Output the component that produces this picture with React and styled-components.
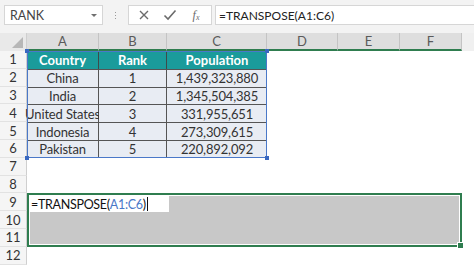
import React from 'react';
import styled, { createGlobalStyle } from 'styled-components';

const GlobalStyle = createGlobalStyle`
  html, body { margin: 0; padding: 0; background: #ffffff; }
  body { font-family: Lato, "Open Sans", sans-serif; overflow: hidden; }
`;

const columns = ['A', 'B', 'C', 'D', 'E', 'F'];
const data = [
  ['China', '1', '1,439,323,880'],
  ['India', '2', '1,345,504,385'],
  ['United States', '3', '331,955,651'],
  ['Indonesia', '4', '273,309,615'],
  ['Pakistan', '5', '220,892,092'],
];
const ROWS = 12;

export default function App() {
  return (
    <Page>
      <GlobalStyle />
      <FormulaBar>
        <NameBox>
          <span>RANK</span>
          <Caret />
        </NameBox>
        <Grip>
          <i /><i /><i />
        </Grip>
        <Buttons>
          <IconBtn>
            <svg width="12" height="12" viewBox="0 0 12 12">
              <path d="M2 2 L10 10 M10 2 L2 10" stroke="#6b6b6b" strokeWidth="1.4" fill="none" />
            </svg>
          </IconBtn>
          <IconBtn>
            <svg width="14" height="12" viewBox="0 0 14 12">
              <path d="M1.5 6.5 L5 10 L12.5 1.5" stroke="#6b6b6b" strokeWidth="1.6" fill="none" />
            </svg>
          </IconBtn>
          <IconBtn>
            <Fx>f<sub>x</sub></Fx>
          </IconBtn>
        </Buttons>
        <FormulaInput>=TRANSPOSE(A1:C6)</FormulaInput>
      </FormulaBar>

      <Sheet>
        <Corner>
          <svg width="11" height="11" viewBox="0 0 11 11">
            <path d="M11 0 L11 11 L0 11 Z" fill="#b7b7b7" />
          </svg>
        </Corner>
        {columns.map((c) => (
          <ColHead key={c}>{c}</ColHead>
        ))}
        <ColFiller />

        {Array.from({ length: ROWS }, (_, i) => (
          <RowHead key={i} style={{ gridRow: i + 2 }}>{i + 1}</RowHead>
        ))}

        <THead $col={2}>Country</THead>
        <THead $col={3}>Rank</THead>
        <THead $col={4} $last>Population</THead>
        {data.map((row, r) =>
          row.map((v, c) => (
            <TCell key={r + '-' + c} $col={c + 2} $row={r + 3} $last={c === 2}>
              {v}
            </TCell>
          ))
        )}

        <RefBox>
          <Handle $top $left />
          <Handle $top />
          <Handle $left />
          <Handle />
        </RefBox>

        <Selection>
          <EditCell>
            =TRANSPOSE(<Ref>A1:C6</Ref>)<Cursor />
          </EditCell>
          <SelHandle />
        </Selection>
      </Sheet>
    </Page>
  );
}

const Page = styled.div`
  width: 474px;
  height: 266px;
  overflow: hidden;
  background: #ffffff;
`;

const FormulaBar = styled.div`
  height: 33px;
  box-sizing: border-box;
  padding: 5px 0 0 4px;
  background: #f3f3f3;
  display: flex;
  align-items: flex-start;
`;

const Box = styled.div`
  height: 20px;
  box-sizing: border-box;
  background: #ffffff;
  border: 1px solid #d6d6d6;
  display: flex;
  align-items: center;
`;

const NameBox = styled(Box)`
  width: 99px;
  padding: 0 5px 0 5px;
  justify-content: space-between;
  font-size: 12.5px;
  color: #444;
`;

const Caret = styled.span`
  width: 0;
  height: 0;
  border-left: 3px solid transparent;
  border-right: 3px solid transparent;
  border-top: 3px solid #707070;
`;

const Grip = styled.div`
  width: 25px;
  height: 20px;
  display: flex;
  flex-direction: column;
  align-items: center;
  justify-content: center;
  gap: 2px;
  i {
    width: 1px;
    height: 1px;
    background: #9a9a9a;
  }
`;

const Buttons = styled(Box)`
  width: 84px;
  justify-content: space-around;
  padding: 0 2px;
`;

const IconBtn = styled.span`
  width: 22px;
  display: flex;
  justify-content: center;
  align-items: center;
`;

const Fx = styled.span`
  font-family: "Liberation Serif", serif;
  font-style: italic;
  font-size: 12px;
  color: #6b6b6b;
  sub {
    font-size: 8px;
    vertical-align: -1px;
  }
`;

const FormulaInput = styled(Box)`
  flex: 1;
  margin-left: 3px;
  border-right: none;
  padding-left: 3px;
  font-size: 12px;
  color: #222;
`;

const Sheet = styled.div`
  display: grid;
  grid-template-columns: 27px 72px 68px 100px 71px 62px 62px 1fr;
  grid-template-rows: 18px repeat(${ROWS}, 17.8px);
  font-size: 13px;
`;

const Corner = styled.div`
  grid-column: 1;
  grid-row: 1;
  background: #e9e9e9;
  border-right: 1px solid #cfcfcf;
  display: flex;
  align-items: flex-end;
  justify-content: flex-end;
  padding: 0 3px 3px 0;
`;

const ColHead = styled.div`
  grid-row: 1;
  background: #dedede;
  border-right: 1px solid #c4c4c4;
  border-bottom: 2px solid #2f7d4f;
  color: #5a5a5a;
  display: flex;
  align-items: center;
  justify-content: center;
  font-size: 13px;
`;

const ColFiller = styled.div`
  grid-row: 1;
  grid-column: 8;
  background: #f0f0f0;
`;

const RowHead = styled.div`
  grid-column: 1;
  background: #f5f5f5;
  border-right: 1px solid #cfcfcf;
  border-bottom: 1px solid #e2e2e2;
  color: #333;
  display: flex;
  align-items: center;
  justify-content: center;
`;

const THead = styled.div`
  grid-column: ${(p) => p.$col};
  grid-row: 2;
  background: #1a9b9b;
  color: #ffffff;
  font-weight: 700;
  display: flex;
  align-items: center;
  justify-content: center;
  border-right: ${(p) => (p.$last ? 'none' : '1.5px solid #3d4b4b')};
`;

const TCell = styled.div`
  grid-column: ${(p) => p.$col};
  grid-row: ${(p) => p.$row};
  background: #e8ecf3;
  color: #333;
  display: flex;
  align-items: center;
  justify-content: center;
  white-space: nowrap;
  letter-spacing: -0.15px;
  border-top: 1.5px solid #555;
  border-right: ${(p) => (p.$last ? 'none' : '1.5px solid #555')};
`;

const RefBox = styled.div`
  grid-column: 2 / 5;
  grid-row: 2 / 8;
  position: relative;
  border: 1.5px solid #4a78c8;
  pointer-events: none;
  z-index: 2;
`;

const Handle = styled.span`
  position: absolute;
  width: 4px;
  height: 4px;
  background: #3a68c0;
  ${(p) => (p.$top ? 'top: -3px;' : 'bottom: -3px;')}
  ${(p) => (p.$left ? 'left: -3px;' : 'right: -3px;')}
`;

const Selection = styled.div`
  grid-column: 2 / 8;
  grid-row: 10 / 13;
  position: relative;
  background: #c8c8c8;
  border: 2px solid #2f7d4f;
  box-shadow: inset 0 0 0 1px #ffffff;
  z-index: 2;
`;

const EditCell = styled.div`
  width: 138px;
  height: 16px;
  margin: 1px 0 0 1px;
  padding-left: 1px;
  background: #ffffff;
  color: #111;
  display: flex;
  align-items: center;
  white-space: nowrap;
  font-size: 12.5px;
  letter-spacing: -0.3px;
`;

const Ref = styled.span`
  color: #4a78c8;
`;

const Cursor = styled.span`
  width: 1px;
  height: 14px;
  margin-left: 1px;
  background: #111;
`;

const SelHandle = styled.span`
  position: absolute;
  right: -4px;
  bottom: -4px;
  width: 5px;
  height: 5px;
  background: #2f7d4f;
  border: 1px solid #ffffff;
`;
